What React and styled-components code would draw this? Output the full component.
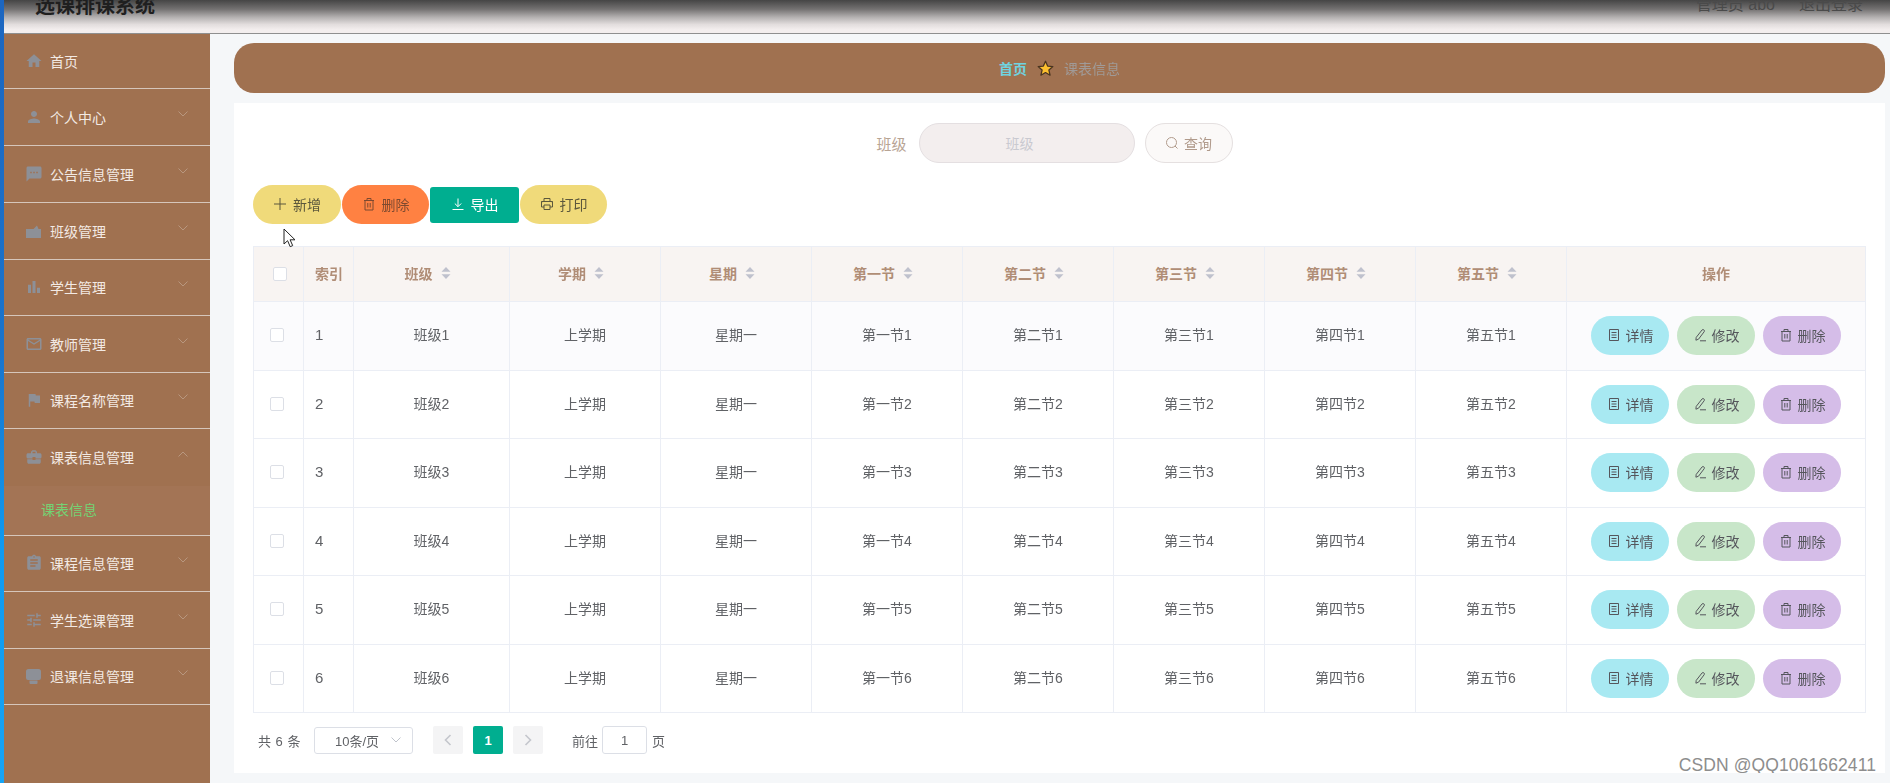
import React from "react";
import styled, { createGlobalStyle } from "styled-components";
import {
  MdHome, MdPerson, MdSms, MdBarChart, MdMailOutline, MdFlag,
  MdBusinessCenter, MdAssignment, MdTune,
} from "react-icons/md";

const Global = createGlobalStyle`
  html, body { margin: 0; padding: 0; width: 1890px; height: 783px; overflow: hidden; background: #f5f7f9; }
  * { box-sizing: border-box; }
  body { font-family: "Liberation Sans", "Noto Sans CJK SC", sans-serif; }
`;

const Page = styled.div`
  display: flex; width: 1890px; height: 783px; overflow: hidden; position: relative;
  filter: blur(0.35px);
`;
const DesktopEdge = styled.div`
  flex: 0 0 4px;
  background: linear-gradient(180deg, #1c66c0 0%, #1a74cc 45%, #0f9af0 70%, #16a4f5 100%);
`;
const Shell = styled.div`
  flex: 1; display: flex; flex-direction: column; min-width: 0;
`;
const TopBar = styled.header`
  flex: 0 0 34px; height: 34px; padding: 0 27px 22px 31px;
  display: flex; align-items: center; justify-content: space-between; overflow: hidden;
  background: linear-gradient(180deg, #454545 0%, #747272 28%, #b3b0b0 52%, #e2dddd 74%, #f3eeee 90%);
  border-bottom: 1px solid #8f8f8f;
`;
const Title = styled.div`
  font-size: 20px; font-weight: 700; color: #1f1f1f; line-height: 24px; white-space: nowrap;
`;
const UserArea = styled.div`
  display: flex; gap: 24px; font-size: 16px; color: #4a4a4a; line-height: 20px; padding-bottom: 2px;
`;
const Body = styled.div`
  flex: 1; display: flex; min-height: 0;
`;
const Sidebar = styled.nav`
  flex: 0 0 206px; background: #a07150; display: flex; flex-direction: column;
`;
const MenuItem = styled.div`
  height: ${p => p.$h}px; flex: 0 0 auto; display: flex; align-items: center;
  padding: 0 22px 1px 19px; gap: 6px; color: #f3eae4; font-size: 14px;
  border-bottom: ${p => p.$open ? "none" : "1.5px solid #d6c6bb"};
`;
const MenuIcon = styled.span`
  width: 21px; display: flex; justify-content: center; color: #8d9097; font-size: 18px;
`;
const MenuLabel = styled.span`flex: 1; white-space: nowrap;`;
const MenuChevron = styled.svg`
  width: 10px; height: 6px; fill: none; stroke: #b8977f; stroke-width: 1; margin-bottom: 6px;
`;
const SubItem = styled.div`
  height: 50px; padding: 0 0 3px 37px; display: flex; align-items: center; font-size: 14px;
  color: #74d374; background: #a37455; border-bottom: 1.5px solid #d6c6bb;
`;
const Main = styled.main`
  flex: 1; min-width: 0; padding: 9px 5px 10px 24px; display: flex; flex-direction: column; gap: 10px;
`;
const Crumb = styled.div`
  flex: 0 0 50px; background: #a07150; border-radius: 20px; display: flex; align-items: center;
  justify-content: center; gap: 10px; font-size: 14px;
`;
const CrumbHome = styled.span`color: #6fd3e0; font-weight: 700;`;
const CrumbCurrent = styled.span`color: #a09a97;`;
const Panel = styled.section`
  flex: 1; background: #fff; padding: 20px 20px 0 19px; position: relative; overflow: hidden;
`;
const SearchRow = styled.div`
  display: flex; align-items: center; justify-content: center; height: 40px; padding-right: 9px;
`;
const SearchLabel = styled.label`
  font-size: 15px; color: #b8a494; margin-right: 12px;
`;
const SearchInput = styled.div`
  width: 216px; height: 40px; border-radius: 20px; background: #f3eeee; border: 1px solid #e4dfe1;
  color: #c9c9d0; font-size: 14px; display: flex; align-items: center; justify-content: center;
  padding-right: 14px;
`;
const QueryButton = styled.div`
  width: 88px; height: 40px; margin-left: 10px; border-radius: 20px; background: #fbf9f8;
  border: 1px solid #e5e0e0; color: #b09a8b; font-size: 14px; display: flex; align-items: center;
  justify-content: center; gap: 5px;
`;
const Toolbar = styled.div`
  display: flex; align-items: center; margin-top: 22px; height: 39px; gap: 1px;
`;
const ToolButton = styled.div`
  width: ${p => p.$w}px; height: ${p => p.$square ? 36 : 39}px; border-radius: ${p => p.$square ? "3px" : "20px"};
  background: ${p => p.$bg}; color: ${p => p.$fg}; font-size: 14px;
  display: flex; align-items: center; justify-content: center; gap: 6px; padding-bottom: 1px;
`;
const Table = styled.table`
  width: 1612px; margin-top: 22px; border-collapse: collapse; table-layout: fixed;
  font-size: 14px; color: #606266;
  border: 1px solid #ebeef5;
`;
const HeadRow = styled.tr`height: 55px; background: #f8f4f2;`;
const Row = styled.tr`height: 68.5px; background: ${p => p.$hl ? "#fbfbfd" : "#fff"};`;
const Th = styled.th`
  border: 1px solid #ebeef5; font-weight: 700; color: #b08d76; padding: 0 0 3px;
  text-align: ${p => p.$left ? "left" : "center"};
  padding-left: ${p => p.$left ? "11px" : "0"};
`;
const Td = styled.td`
  border: 1px solid #ebeef5; padding: 0 0 ${p => p.$left ? "2px" : "3px"}; padding-left: ${p => p.$left ? "11px" : "0"};
  text-align: ${p => p.$left ? "left" : "center"};
  font-size: ${p => p.$left ? "15px" : "14px"};
`;
const ActionCell = styled.td`
  border: 1px solid #ebeef5; padding: 0;
`;
const SortWrap = styled.span`
  display: inline-flex; align-items: center; gap: 8px; padding-right: 8px;
`;
const CheckBox = styled.span`
  display: inline-block; width: 14px; height: 14px; border: 1px solid #dcdfe6; border-radius: 2px;
  background: #fff; vertical-align: middle; margin-left: ${p => p.$head ? "2px" : "0"};
  margin-right: ${p => p.$head ? "0" : "3px"};
`;
const ActionGroup = styled.div`
  display: flex; justify-content: center; gap: 8px;
`;
const ActionButton = styled.div`
  width: 78px; height: 39px; border-radius: 20px; background: ${p => p.$bg}; padding-bottom: 1px;
  color: #55565c; font-size: 14px; display: flex; align-items: center; justify-content: center; gap: 5px;
`;
const Pager = styled.div`
  display: flex; align-items: center; margin-top: 13px; height: 28px; font-size: 13px; color: #606266;
  padding-left: 5px;
`;
const PagerTotal = styled.span`width: 56px; white-space: nowrap; word-spacing: 1px;`;
const PageSize = styled.div`
  width: 99px; height: 27px; border: 1px solid #dcdfe6; border-radius: 3px; display: flex;
  align-items: center; justify-content: space-between; padding: 0 11px 0 20px; color: #606266; font-size: 13px;
`;
const PageArrow = styled.div`
  width: 30px; height: 28px; background: #f4f4f5; border-radius: 2px; display: flex; align-items: center;
  justify-content: center; margin-left: ${p => p.$ml}px;
`;
const PageCurrent = styled.div`
  width: 30px; height: 28px; background: #00ae90; color: #fff; font-weight: 700; border-radius: 2px;
  display: flex; align-items: center; justify-content: center; margin-left: 10px;
`;
const JumpLabel = styled.span`margin-left: ${p => p.$ml}px;`;
const JumpInput = styled.div`
  width: 45px; height: 28px; border: 1px solid #dcdfe6; border-radius: 3px; margin-left: 4px;
  display: flex; align-items: center; justify-content: center;
`;
const Watermark = styled.div`
  position: absolute; right: 9px; bottom: -3px; font-family: "Liberation Sans", sans-serif;
  font-size: 17.5px; line-height: 22px; color: #8d8d8d; letter-spacing: 0.1px;
`;
const Cursor = styled.svg`
  position: absolute; left: 283px; top: 228px; width: 14px; height: 20px;
`;

const Line = styled.svg`
  width: ${p => p.$s || 14}px; height: ${p => p.$s || 14}px; fill: none; stroke: currentColor;
  stroke-width: 1; flex: 0 0 auto;
`;

const Plus = () => <Line viewBox="0 0 14 14"><path d="M7 1v12M1 7h12" /></Line>;
const Trash = () => (
  <Line viewBox="0 0 14 14"><path d="M2 3.5h10M5 3.5V1.5h4v2M3 3.5v9.5h8V3.5M5.8 6v4.5M8.2 6v4.5" /></Line>
);
const Download = () => (
  <Line viewBox="0 0 14 14"><path d="M7 1.5v8M3.8 6.5 7 9.7l3.2-3.2M1.5 12.5h11" /></Line>
);
const Printer = () => (
  <Line viewBox="0 0 14 14"><path d="M4 4.5V1.5h6v3M4 10H1.5V4.5h11V10H10M4 8h6v4.5H4z" /><path d="M2 4.5 1.5 6M12 4.5l.5 1.5" /></Line>
);
const SearchGlyph = () => (
  <Line viewBox="0 0 14 14"><circle cx="6.5" cy="6.5" r="5" /><path d="m10 10 2.5 2.5" /></Line>
);
const Tickets = () => (
  <Line viewBox="0 0 14 14"><path d="M2.5 1.5h9v11h-9zM4.5 4.500h5M4.500 7h5M4.500 9.500h5" /></Line>
);
const Edit = () => (
  <Line viewBox="0 0 14 14"><path d="M3.2 9.400 9 2a1.400 1.400 0 0 1 2.200 1.700L5.500 11.200l-2.600 1zM7 12.800h6" /></Line>
);
const Chevron = ({ up }) => (
  <MenuChevron viewBox="0 0 10 6"><path d={up ? "M.5 5.500 5 1l4.500 4.500" : "M.5.500 5 5 9.500.500"} /></MenuChevron>
);
const Wallet = () => (
  <svg width="15" height="14" viewBox="0 0 15 14" fill="currentColor"><path d="M0 5h7.500L11 1.500 12.500 5H15v9H0z" /></svg>
);
const Monitor = () => (
  <svg width="15" height="15" viewBox="0 0 15 15" fill="currentColor"><path d="M2.500 0h10A2.500 2.500 0 0 1 15 2.500V9a2 2 0 0 1-2 2H2a2 2 0 0 1-2-2V2.500A2.500 2.500 0 0 1 2.500 0zM3.500 11.500h8V14a1 1 0 0 1-1 1h-6a1 1 0 0 1-1-1z" /></svg>
);
const Star = () => (
  <svg width="17" height="17" viewBox="0 0 16 16">
    <path d="M8 1.200 10 5.700l4.900.5-3.700 3.300 1.100 4.800L8 11.800l-4.300 2.500 1.100-4.800L1.100 6.200 6 5.700z" fill="#fdc02f" stroke="#4a3420" strokeWidth="1.200" strokeLinejoin="round" />
  </svg>
);
const SortCaret = () => (
  <svg width="10" height="12" viewBox="0 0 10 12" fill="#bfc1cd"><path d="M5 0 9.500 4.800H.5zM.5 7.200h9L5 12z" /></svg>
);
const PagerChevron = ({ dir, color }) => (
  <svg width="8" height="12" viewBox="0 0 8 12" fill="none" stroke={color} strokeWidth="1.600">
    <path d={dir === "left" ? "M6.500 1 1.500 6l5 5" : "M1.500 1l5 5-5 5"} />
  </svg>
);
const SelectChevron = () => (
  <svg width="10" height="6" viewBox="0 0 10 6" fill="none" stroke="#c0c4cc" strokeWidth="1">
    <path d="M.5.500 5 5 9.500.500" />
  </svg>
);

const menu = [
  { label: "首页", icon: <MdHome />, h: 55, plain: true },
  { label: "个人中心", icon: <MdPerson />, h: 57 },
  { label: "公告信息管理", icon: <MdSms />, h: 57 },
  { label: "班级管理", icon: <Wallet />, h: 57 },
  { label: "学生管理", icon: <MdBarChart />, h: 56 },
  { label: "教师管理", icon: <MdMailOutline />, h: 57 },
  { label: "课程名称管理", icon: <MdFlag />, h: 56 },
  { label: "课表信息管理", icon: <MdBusinessCenter />, h: 57, open: true },
  { label: "课程信息管理", icon: <MdAssignment />, h: 56 },
  { label: "学生选课管理", icon: <MdTune />, h: 57 },
  { label: "退课信息管理", icon: <Monitor />, h: 56 },
];

const columns = [
  { title: "班级", w: 156, v: i => `班级${i}` },
  { title: "学期", w: 151, v: () => "上学期" },
  { title: "星期", w: 151, v: () => "星期一" },
  { title: "第一节", w: 151, v: i => `第一节${i}` },
  { title: "第二节", w: 151, v: i => `第二节${i}` },
  { title: "第三节", w: 151, v: i => `第三节${i}` },
  { title: "第四节", w: 151, v: i => `第四节${i}` },
  { title: "第五节", w: 151, v: i => `第五节${i}` },
];

export default function App() {
  return (
    <Page>
      <Global />
      <DesktopEdge />
      <Shell>
        <TopBar>
          <Title>选课排课系统</Title>
          <UserArea><span>管理员 abo</span><span>退出登录</span></UserArea>
        </TopBar>
        <Body>
          <Sidebar>
            {menu.map(m => (
              <React.Fragment key={m.label}>
                <MenuItem $h={m.h} $open={m.open}>
                  <MenuIcon>{m.icon}</MenuIcon>
                  <MenuLabel>{m.label}</MenuLabel>
                  {!m.plain && <Chevron up={m.open} />}
                </MenuItem>
                {m.open && <SubItem>课表信息</SubItem>}
              </React.Fragment>
            ))}
          </Sidebar>
          <Main>
            <Crumb>
              <CrumbHome>首页</CrumbHome>
              <Star />
              <CrumbCurrent>课表信息</CrumbCurrent>
            </Crumb>
            <Panel>
              <SearchRow>
                <SearchLabel>班级</SearchLabel>
                <SearchInput>班级</SearchInput>
                <QueryButton><SearchGlyph />查询</QueryButton>
              </SearchRow>
              <Toolbar>
                <ToolButton $w={88} $bg="#f0da7a" $fg="#5b573c"><Plus />新增</ToolButton>
                <ToolButton $w={87} $bg="#ff8142" $fg="#7d4a30"><Trash />删除</ToolButton>
                <ToolButton $w={89} $bg="#00ae90" $fg="#fff" $square><Download />导出</ToolButton>
                <ToolButton $w={87} $bg="#f0da7a" $fg="#5b573c"><Printer />打印</ToolButton>
              </Toolbar>
              <Table>
                <colgroup>
                  <col width="50" />
                  <col width="50" />
                  {columns.map(c => <col key={c.title} width={c.w} />)}
                  <col width="299" />
                </colgroup>
                <thead>
                  <HeadRow>
                    <Th><CheckBox $head /></Th>
                    <Th $left>索引</Th>
                    {columns.map(c => (
                      <Th key={c.title}><SortWrap>{c.title}<SortCaret /></SortWrap></Th>
                    ))}
                    <Th>操作</Th>
                  </HeadRow>
                </thead>
                <tbody>
                  {[1, 2, 3, 4, 5, 6].map(i => (
                    <Row key={i} $hl={i === 1}>
                      <Td><CheckBox /></Td>
                      <Td $left>{i}</Td>
                      {columns.map(c => <Td key={c.title}>{c.v(i)}</Td>)}
                      <ActionCell>
                        <ActionGroup>
                          <ActionButton $bg="#a8e9f2"><Tickets />详情</ActionButton>
                          <ActionButton $bg="#c8e6c9"><Edit />修改</ActionButton>
                          <ActionButton $bg="#d5bde8"><Trash />删除</ActionButton>
                        </ActionGroup>
                      </ActionCell>
                    </Row>
                  ))}
                </tbody>
              </Table>
              <Pager>
                <PagerTotal>共 6 条</PagerTotal>
                <PageSize>10条/页<SelectChevron /></PageSize>
                <PageArrow $ml={20}><PagerChevron dir="left" color="#c4c6cc" /></PageArrow>
                <PageCurrent>1</PageCurrent>
                <PageArrow $ml={10}><PagerChevron dir="right" color="#c4c6cc" /></PageArrow>
                <JumpLabel $ml={29}>前往</JumpLabel>
                <JumpInput>1</JumpInput>
                <JumpLabel $ml={5}>页</JumpLabel>
              </Pager>
              <Watermark>CSDN @QQ1061662411</Watermark>
            </Panel>
          </Main>
        </Body>
      </Shell>
      <Cursor viewBox="0 0 14 20">
        <path d="M1 1v15l3.600-3.300 2.600 6 2.500-1.100-2.600-5.800H12z" fill="#fff" stroke="#222" strokeWidth="1" strokeLinejoin="round" />
      </Cursor>
    </Page>
  );
}
